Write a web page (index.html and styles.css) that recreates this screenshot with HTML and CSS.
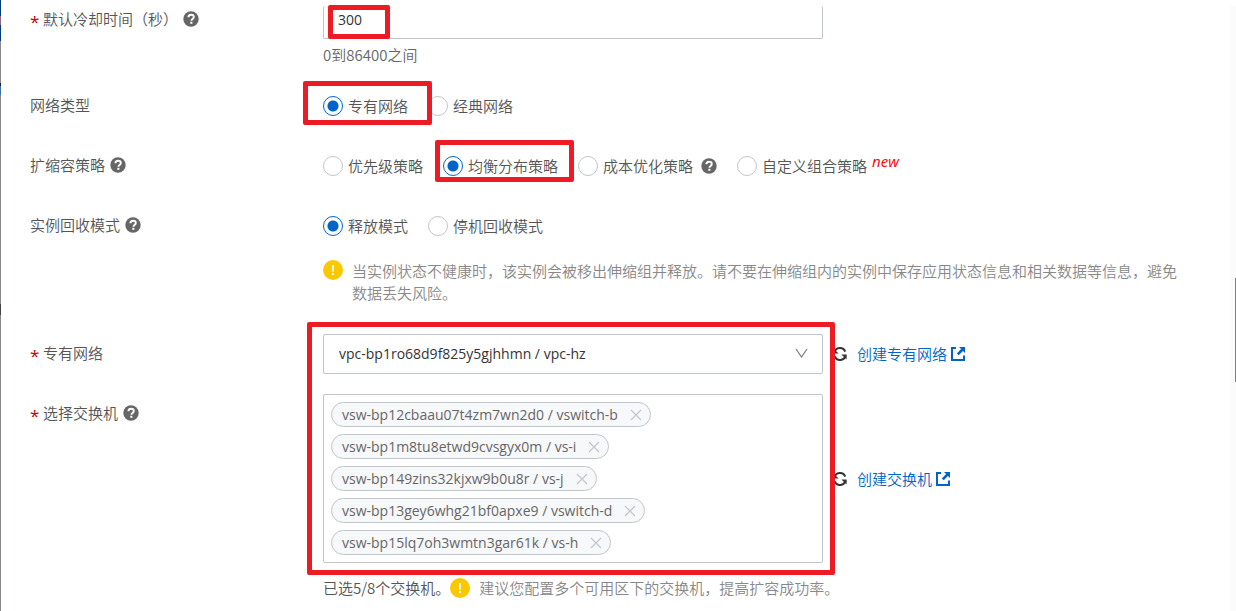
FILE: index.html
```html
<!DOCTYPE html>
<html lang="zh-CN">
<head>
    <meta charset="UTF-8">
    <meta name="viewport" content="width=device-width, initial-scale=1.0">
    <title>创建伸缩组</title>
    <link rel="stylesheet" href="styles.css">
</head>
<body>
    <!-- shared icons -->
    <svg class="sprite" aria-hidden="true">
        <symbol id="icon-help" viewBox="0 0 16 16">
            <circle cx="8" cy="8" r="7.7" fill="#666"/>
            <path d="M5.4 6.3C5.4 4.7 6.5 3.7 8.1 3.7s2.7 1 2.7 2.3c0 1.9-2.4 2-2.4 3.8" fill="none" stroke="#fff" stroke-width="1.9"/>
            <rect x="7.3" y="10.8" width="2.1" height="2" fill="#fff"/>
        </symbol>
        <symbol id="icon-warn" viewBox="0 0 20 20">
            <circle cx="10" cy="10" r="10" fill="#fac800"/>
            <path d="M9 5h2l-.3 6.700H9.300z" fill="#fff"/>
            <rect x="9" y="13" width="2" height="2" fill="#fff"/>
        </symbol>
        <symbol id="icon-refresh" viewBox="0 0 14 14">
            <path d="M1.5 5.5A5.600 5.600 0 0 1 12.200 4.600M12.500 8.500A5.600 5.600 0 0 1 1.800 9.400" fill="none" stroke="#333" stroke-width="2"/>
            <path d="M.4 1.400v5.200h5.200zM13.600 12.600V7.400H8.400z" fill="#333"/>
        </symbol>
        <symbol id="icon-external" viewBox="0 0 14 14">
            <path d="M5 1H1v12h12V8.500" fill="none" stroke="#0064c8" stroke-width="2"/>
            <path d="M8 0h6v6l-2-2-4.300 4.300-1.900-1.900L10.100 2z" fill="#0064c8"/>
        </symbol>
        <symbol id="icon-close" viewBox="0 0 12 12">
            <path d="M1 1l10 10M11 1L1 11" fill="none" stroke="#c4c6cc" stroke-width="1.3"/>
        </symbol>
    </svg>

    <div class="page">
        <div class="edge"></div>
        <form class="form">
            <div class="row row-cooldown">
                <div class="label required">
                    <label for="cooldown">默认冷却时间（秒）</label>
                    <svg class="help"><use href="#icon-help"/></svg>
                </div>
                <div class="control">
                    <div class="field">
                        <input class="text-input" type="text" id="cooldown" value="300">
                        <span class="mark mark-cooldown"></span>
                    </div>
                    <p class="hint">0到86400之间</p>
                </div>
            </div>

            <div class="row">
                <div class="label">网络类型</div>
                <div class="control radios">
                    <label class="radio"><input type="radio" name="network" checked>专有网络<span class="mark mark-network"></span></label>
                    <label class="radio"><input type="radio" name="network">经典网络</label>
                </div>
            </div>

            <div class="row">
                <div class="label">扩缩容策略<svg class="help"><use href="#icon-help"/></svg></div>
                <div class="control radios">
                    <label class="radio"><input type="radio" name="policy">优先级策略</label>
                    <label class="radio"><input type="radio" name="policy" checked>均衡分布策略<span class="mark mark-policy"></span></label>
                    <div class="radio-help">
                        <label class="radio"><input type="radio" name="policy">成本优化策略</label>
                        <svg class="help"><use href="#icon-help"/></svg>
                    </div>
                    <label class="radio"><input type="radio" name="policy">自定义组合策略<em class="new">new</em></label>
                </div>
            </div>

            <div class="row row-recycle">
                <div class="label">实例回收模式<svg class="help"><use href="#icon-help"/></svg></div>
                <div class="control">
                    <div class="radios">
                        <label class="radio"><input type="radio" name="recycle" checked>释放模式</label>
                        <label class="radio"><input type="radio" name="recycle">停机回收模式</label>
                    </div>
                    <div class="notice">
                        <svg class="warn"><use href="#icon-warn"/></svg>
                        <p>当实例状态不健康时，该实例会被移出伸缩组并释放。请不要在伸缩组内的实例中保存应用状态信息和相关数据等信息，避免数据丢失风险。</p>
                    </div>
                </div>
            </div>

            <div class="network-group">
                <div class="row row-vpc">
                    <div class="label required"><label for="vpc">专有网络</label></div>
                    <div class="control with-actions">
                        <div class="field">
                            <select class="select" id="vpc">
                                <option>vpc-bp1ro68d9f825y5gjhhmn / vpc-hz</option>
                            </select>
                            <svg class="chevron" viewBox="0 0 12 10"><path d="M.5 1L6 9l5.500-8" fill="none" stroke="#808080" stroke-width="1.3"/></svg>
                        </div>
                        <button class="refresh" type="button" aria-label="刷新"><svg><use href="#icon-refresh"/></svg></button>
                        <a class="link" href="#">创建专有网络<svg><use href="#icon-external"/></svg></a>
                    </div>
                </div>

                <div class="row row-vswitch">
                    <div class="label required">选择交换机<svg class="help"><use href="#icon-help"/></svg></div>
                    <div class="control">
                        <div class="with-actions">
                            <div class="field tags">
                                <span class="tag">vsw-bp12cbaau07t4zm7wn2d0 / vswitch-b<button type="button" aria-label="移除"><svg><use href="#icon-close"/></svg></button></span>
                                <span class="tag">vsw-bp1m8tu8etwd9cvsgyx0m / vs-i<button type="button" aria-label="移除"><svg><use href="#icon-close"/></svg></button></span>
                                <span class="tag">vsw-bp149zins32kjxw9b0u8r / vs-j<button type="button" aria-label="移除"><svg><use href="#icon-close"/></svg></button></span>
                                <span class="tag">vsw-bp13gey6whg21bf0apxe9 / vswitch-d<button type="button" aria-label="移除"><svg><use href="#icon-close"/></svg></button></span>
                                <span class="tag">vsw-bp15lq7oh3wmtn3gar61k / vs-h<button type="button" aria-label="移除"><svg><use href="#icon-close"/></svg></button></span>
                            </div>
                            <button class="refresh" type="button" aria-label="刷新"><svg><use href="#icon-refresh"/></svg></button>
                            <a class="link" href="#">创建交换机<svg><use href="#icon-external"/></svg></a>
                        </div>
                        <div class="summary">
                            <span>已选5/8个交换机。</span>
                            <svg class="warn"><use href="#icon-warn"/></svg>
                            <span class="tip">建议您配置多个可用区下的交换机，提高扩容成功率。</span>
                        </div>
                    </div>
                </div>
                <span class="mark mark-fields"></span>
            </div>
        </form>
        <div class="scroll-track"><div class="scroll-thumb"></div></div>
    </div>
</body>
</html>
```
FILE: styles.css
```css
* {
    box-sizing: border-box;
}
body {
    margin: 0;
    background: #fff;
    color: #555;
    font: 15px/20px "Noto Sans CJK SC", sans-serif;
    font-weight: 350;
}
p {
    margin: 0;
}
svg {
    flex: none;
}
.sprite {
    display: none;
}
.page {
    display: flex;
    min-height: 100vh;
}

/* window edges */
.edge {
    width: 1px;
    background: linear-gradient(#003c7d 16px, #8a6a7c 16px 25px, #003c7d 25px 41px, #87898c 41px 83px, #222 83px 86px, #3a70b0 86px 95px, #87898c 95px 304px, #444 304px 315px, #87898c 315px);
}
.scroll-track {
    width: 6px;
    margin-top: 6px;
    padding-top: 272px;
    background: #fbfbfb;
}
.scroll-thumb {
    width: 1px;
    height: 104px;
    margin-left: auto;
    background: #808080;
}

/* form rows */
.form {
    flex: 1;
    min-width: 0;
    padding: 6px 44px 12px 29px;
}
.row {
    display: grid;
    grid-template-columns: 293px 1fr;
    margin-bottom: 40px;
}
.row-cooldown {
    margin-bottom: 31px;
}
.row-recycle {
    margin-bottom: 28px;
}
.row-vpc {
    margin-bottom: 20px;
}
.row-vswitch {
    margin-bottom: 0;
}
.label {
    display: flex;
    align-items: center;
    align-self: start;
    height: 18px;
}
.row-cooldown .label {
    height: 26px;
}
.row-vpc .label,
.row-vswitch .label {
    height: 38px;
}
.required::before {
    content: "*";
    width: 13px;
    color: #c80000;
    font: 17px/12px "Open Sans", sans-serif;
    padding-top: 6px;
}
.help {
    width: 16px;
    height: 16px;
    margin-left: 5px;
}
.field {
    position: relative;
    flex: 0 1 500px;
    max-width: 500px;
}
.text-input,
.select {
    display: block;
    width: 100%;
    border: 1px solid #c0c6cc;
    border-radius: 2px;
    background: #fff;
    color: #333;
    font: 14px/20px "Open Sans", sans-serif;
    outline: none;
}
.text-input {
    height: 33px;
    padding: 0 14px 5px;
    border-top: 0;
}
.select {
    height: 40px;
    padding: 0 40px 0 15px;
    appearance: none;
}
.chevron {
    position: absolute;
    top: 14px;
    right: 15px;
    width: 13px;
    height: 10px;
    pointer-events: none;
}
.hint {
    margin-top: 6px;
    color: #666;
}

/* radios */
.radios {
    display: flex;
    gap: 20px;
}
.radio,
.radio-help {
    position: relative;
    display: flex;
    align-items: center;
    white-space: nowrap;
}
.radio input {
    appearance: none;
    width: 20px;
    height: 20px;
    margin: 0 5px 0 0;
    border: 1px solid #c0c6cc;
    border-radius: 50%;
    background: #fff;
}
.radio input:checked {
    border-color: #0064c8;
    background: radial-gradient(circle, #0064c8 5px, #fff 6px);
}
.radio-help .help {
    margin-left: 8px;
}
.new {
    align-self: flex-start;
    margin: -5px 0 0 5px;
    color: #f00;
    font: italic 15px/20px "Open Sans", sans-serif;
}

/* notices */
.notice {
    display: flex;
    gap: 9px;
    margin-top: 24px;
    color: #888;
    line-height: 22px;
}
.warn {
    width: 20px;
    height: 20px;
}
.notice p {
    padding-bottom: 2px;
}
.summary {
    display: flex;
    align-items: center;
    margin-top: 15px;
}
.summary .warn {
    margin-right: 9px;
}
.tip {
    color: #888;
}

/* network selects */
.network-group {
    position: relative;
}
.with-actions {
    display: flex;
    align-items: center;
}
.refresh {
    display: flex;
    margin: 0 10px;
    padding: 0;
    border: 0;
    background: none;
    cursor: pointer;
}
.refresh svg,
.link svg {
    width: 14px;
    height: 14px;
}
.link {
    display: flex;
    align-items: center;
    gap: 4px;
    color: #0064c8;
    text-decoration: none;
    white-space: nowrap;
}
.link:hover {
    text-decoration: underline;
}
.tags {
    display: flex;
    flex-direction: column;
    align-items: flex-start;
    gap: 7px;
    padding: 7px;
    border: 1px solid #c0c6cc;
    border-radius: 2px;
}
.tag {
    display: flex;
    align-items: center;
    height: 25px;
    padding: 0 8px 0 10px;
    border: 1px solid #c0c6cc;
    border-radius: 13px;
    background: #f7f8fa;
    color: #666;
    font: 14px/20px "Open Sans", sans-serif;
}
.tag button {
    display: flex;
    margin-left: 12px;
    padding: 0;
    border: 0;
    background: none;
    cursor: pointer;
}
.tag svg {
    width: 12px;
    height: 12px;
}

/* red highlight frames */
.mark {
    position: absolute;
    z-index: 1;
    border: 5px solid #ed1c24;
    border-radius: 2px;
    pointer-events: none;
}
.mark-cooldown {
    top: -1px;
    left: 5px;
    width: 62px;
    height: 34px;
}
.mark-network {
    top: -15px;
    left: -20px;
    width: 129px;
    height: 44px;
}
.mark-policy {
    top: -16px;
    left: -8px;
    width: 139px;
    height: 42px;
}
.mark-fields {
    top: -12px;
    left: 277px;
    width: 528px;
    height: 253px;
}
```
